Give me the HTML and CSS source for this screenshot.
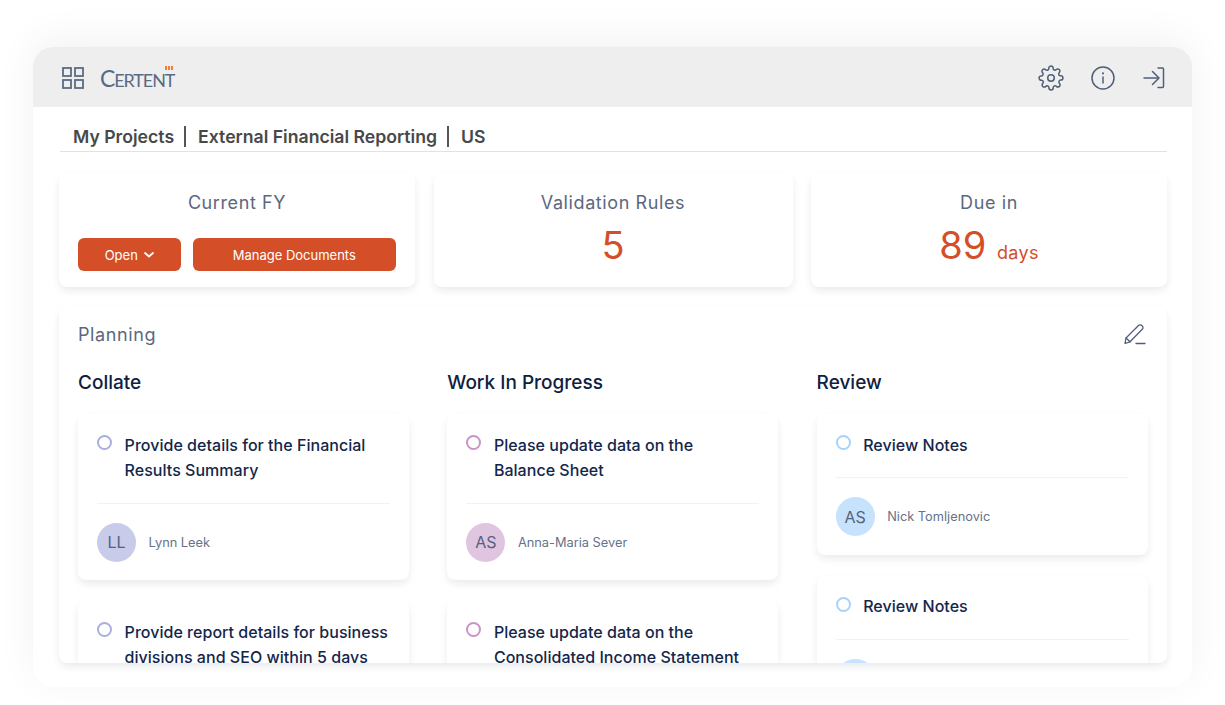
FILE: index.html
```html
<!DOCTYPE html>
<html lang="en">
<head>
<meta charset="utf-8">
<title>Certent</title>
<link rel="stylesheet" href="styles.css">
</head>
<body>
<div class="window">
  <header class="topbar">
    <div class="brand">
      <svg class="grid-icon" width="24" height="24" viewBox="0 0 24 24" fill="none" stroke="#5b6b82" stroke-width="1.8"><rect x="2" y="2" width="8" height="8"/><rect x="14" y="2" width="8" height="8"/><rect x="2" y="14" width="8" height="8"/><rect x="14" y="14" width="8" height="8"/></svg>
      <div class="logo"><span class="logo-big">C</span>ERTENT<span class="logo-bars"><i></i><i></i><i></i></span></div>
    </div>
    <div class="actions">
      <svg width="26" height="26" viewBox="0 0 24 24" fill="none" stroke="#4f5f78" stroke-width="1.4" stroke-linecap="round" stroke-linejoin="round"><circle cx="12" cy="12" r="3"/><path d="M19.4 15a1.65 1.65 0 0 0 .33 1.82l.06.06a2 2 0 1 1-2.83 2.83l-.06-.06a1.65 1.65 0 0 0-2.82 1.17V21a2 2 0 1 1-4 0v-.09a1.65 1.65 0 0 0-2.8-1.2l-.06.06a2 2 0 1 1-2.83-2.83l.06-.06a1.65 1.65 0 0 0-1.17-2.82H3a2 2 0 1 1 0-4h.09a1.65 1.65 0 0 0 1.2-2.8l-.06-.06a2 2 0 1 1 2.83-2.83l.06.06a1.65 1.65 0 0 0 2.82-1.17V3a2 2 0 1 1 4 0v.09a1.65 1.65 0 0 0 2.8 1.2l.06-.06a2 2 0 1 1 2.83 2.83l-.06.06a1.65 1.65 0 0 0 1.17 2.82H21a2 2 0 1 1 0 4h-.09a1.65 1.65 0 0 0-1.51 1.06z"/></svg>
      <svg width="24" height="24" viewBox="0 0 24 24" fill="none" stroke="#4f5f78" stroke-width="1.5" stroke-linecap="round"><circle cx="12" cy="12" r="11"/><path d="M12 11v6"/><path d="M12 7.2v.3" stroke-width="2"/></svg>
      <svg width="24" height="24" viewBox="0 0 24 24" fill="none" stroke="#4f5f78" stroke-width="1.5" stroke-linecap="round" stroke-linejoin="round"><path d="M16 2h4.500a1 1 0 0 1 1 1v17.500a1 1 0 0 1-1 1H16"/><path d="M2 12h14.500"/><path d="M10.500 5.500l6.500 6.500-6.500 6.500"/></svg>
    </div>
  </header>
  <main class="content">
    <nav class="crumbs"><span>My Projects</span><span class="sep"></span><span>External Financial Reporting</span><span class="sep"></span><span>US</span></nav>
    <section class="stats">
      <article class="stat">
        <h2 class="stat-title">Current FY</h2>
        <div class="buttons">
          <button class="btn btn-open">Open <svg width="10" height="6" viewBox="0 0 10 6" fill="none" stroke="#fff" stroke-width="1.800" stroke-linecap="round" stroke-linejoin="round"><path d="M1 1l4 3.500L9 1"/></svg></button>
          <button class="btn btn-docs">Manage Documents</button>
        </div>
      </article>
      <article class="stat">
        <h2 class="stat-title">Validation Rules</h2>
        <div class="stat-value">5</div>
      </article>
      <article class="stat">
        <h2 class="stat-title">Due in</h2>
        <div class="stat-value">89 <span class="stat-unit">days</span></div>
      </article>
    </section>
    <section class="planning">
      <div class="planning-head">
        <h2 class="planning-title">Planning</h2>
        <svg class="edit-icon" width="24" height="22" viewBox="0 0 24 22" fill="none" stroke="#4f5f78" stroke-width="1.300" stroke-linecap="round" stroke-linejoin="round"><path d="M2 20.500l1-5.500L15.500 2.500a2.300 2.300 0 0 1 3.300 0l.5.5a2.300 2.300 0 0 1 0 3.300L7 18.800z"/><path d="M3 15l4 3.800"/><path d="M13 20.500h9"/></svg>
      </div>
      <div class="board">
        <div class="col">
          <h3 class="col-title">Collate</h3>
          <article class="task">
            <div class="task-main"><span class="dot dot-lilac"></span><p class="task-text">Provide details for the Financial Results Summary</p></div>
            <div class="task-owner"><span class="avatar av-lilac">LL</span><span class="owner-name">Lynn Leek</span></div>
          </article>
          <article class="task">
            <div class="task-main"><span class="dot dot-lilac"></span><p class="task-text">Provide report details for business divisions and SEO within 5 days</p></div>
          </article>
        </div>
        <div class="col">
          <h3 class="col-title">Work In Progress</h3>
          <article class="task">
            <div class="task-main"><span class="dot dot-pink"></span><p class="task-text">Please update data on the<br>Balance Sheet</p></div>
            <div class="task-owner"><span class="avatar av-pink">AS</span><span class="owner-name">Anna-Maria Sever</span></div>
          </article>
          <article class="task">
            <div class="task-main"><span class="dot dot-pink"></span><p class="task-text">Please update data on the Consolidated Income Statement</p></div>
          </article>
        </div>
        <div class="col">
          <h3 class="col-title">Review</h3>
          <article class="task">
            <div class="task-main"><span class="dot dot-blue"></span><p class="task-text">Review Notes</p></div>
            <div class="task-owner"><span class="avatar av-blue">AS</span><span class="owner-name">Nick Tomljenovic</span></div>
          </article>
          <article class="task">
            <div class="task-main"><span class="dot dot-blue"></span><p class="task-text">Review Notes</p></div>
            <div class="task-owner"><span class="avatar av-blue">AS</span><span class="owner-name">Nick Tomljenovic</span></div>
          </article>
        </div>
      </div>
    </section>
  </main>
</div>
</body>
</html>
```
FILE: styles.css
```css
* { box-sizing: border-box; }
html, body { margin: 0; height: 705px; overflow: hidden; background: #fff; }
body { padding: 47px 33px 18px; font-family: Inter, "Liberation Sans", sans-serif; }
.window { height: 640px; background: #fff; border-radius: 20px; box-shadow: 0 -8px 40px rgba(0, 0, 0, 0.055); overflow: hidden; }
.topbar { height: 60px; background: #eeeeee; display: flex; align-items: center; justify-content: space-between; padding: 1px 26px 0 28px; }
.brand { display: flex; align-items: center; gap: 15px; }
.logo { position: relative; margin-top: 3px; font-family: Lato, sans-serif; font-weight: 400; font-size: 18px; letter-spacing: -1.100px; color: #5a6a82; line-height: 24px; white-space: nowrap; }
.logo-big { font-size: 23px; }
.logo-bars { position: absolute; right: 1px; top: 0; display: flex; gap: 1px; }
.logo-bars i { width: 2px; height: 4px; background: #ee8033; }
.actions { display: flex; align-items: center; gap: 27px; }
.content { padding: 0 25px 0 26px; }
.crumbs { margin: 0 0 21px 1px; height: 45px; padding: 18px 0 0 13px; border-bottom: 1px solid #e2e2e2; display: flex; align-items: flex-start; font-size: 17.650px; line-height: 24px; font-weight: 600; color: #484848; }
.sep { width: 2px; height: 21px; margin: 1px 12px 0 10px; background: #555; }
.stats { display: grid; grid-template-columns: 356px 359px 356px; gap: 18.500px; margin-bottom: 20px; }
.stat { height: 114px; background: #fff; border-radius: 8px; box-shadow: 0 4px 8px -1px rgba(20, 30, 60, 0.1); text-align: center; padding-top: 18px; }
.stat-title { margin: 0; font-size: 18px; line-height: 24px; font-weight: 400; letter-spacing: 0.6px; color: #5a6880; }
.stat-value { margin-top: 7px; font-size: 38px; line-height: 46px; font-weight: 400; color: #d44f27; }
.stat-unit { font-size: 18px; letter-spacing: 0.3px; margin-left: 0; }
.buttons { display: flex; gap: 12px; padding: 23px 19px 0; }
.btn { height: 33px; border: 0; border-radius: 6px; background: #d44f27; color: #fff; font-family: inherit; font-size: 13px; font-weight: 400; padding: 0; display: flex; align-items: center; justify-content: center; gap: 6px; }
.btn-open { width: 102.500px; }
.btn-docs { flex: 1; }
.planning { height: 356px; background: #fff; border-radius: 8px; box-shadow: 0 4px 8px -1px rgba(20, 30, 60, 0.1); padding: 16px 20px 0 19px; overflow: hidden; }
.planning-head { display: flex; align-items: center; justify-content: space-between; height: 24px; }
.edit-icon { margin-top: -2px; }
.planning-title { margin: 0; font-size: 18px; line-height: 24px; font-weight: 400; letter-spacing: 0.6px; color: #5a6880; }
.board { display: grid; grid-template-columns: repeat(3, 331px); gap: 38.300px; margin-top: 24px; }
.col-title { margin: 0 0 19px; font-size: 19px; line-height: 24px; font-weight: 500; color: #0f2040; }
.task { background: #fff; border-radius: 8px; box-shadow: 0 4px 8px -1px rgba(20, 30, 60, 0.1); padding: 18.600px 19px 18.400px; margin-bottom: 21px; }
.task-main { display: flex; gap: 12.600px; padding-bottom: 19px; }
.dot { flex: none; width: 15px; height: 15px; margin-top: 2.400px; border-radius: 50%; border: 2px solid; }
.dot-lilac { border-color: #a9aee0; }
.dot-pink { border-color: #c993c7; }
.dot-blue { border-color: #a6d3fb; }
.task-text { margin: 0; font-size: 16px; line-height: 25.600px; font-weight: 450; letter-spacing: 0.03px; color: #13264a; }
.task-owner { border-top: 1px solid #eef4f2; padding-top: 19px; display: flex; align-items: center; gap: 12.600px; }
.avatar { width: 39px; height: 39px; border-radius: 50%; display: flex; align-items: center; justify-content: center; font-size: 16px; font-weight: 400; color: #56627c; }
.av-lilac { background: #c8cbe9; }
.av-pink { background: #e0c5e1; }
.av-blue { background: #c6e2fd; }
.owner-name { font-size: 12.800px; color: #667289; }
```
